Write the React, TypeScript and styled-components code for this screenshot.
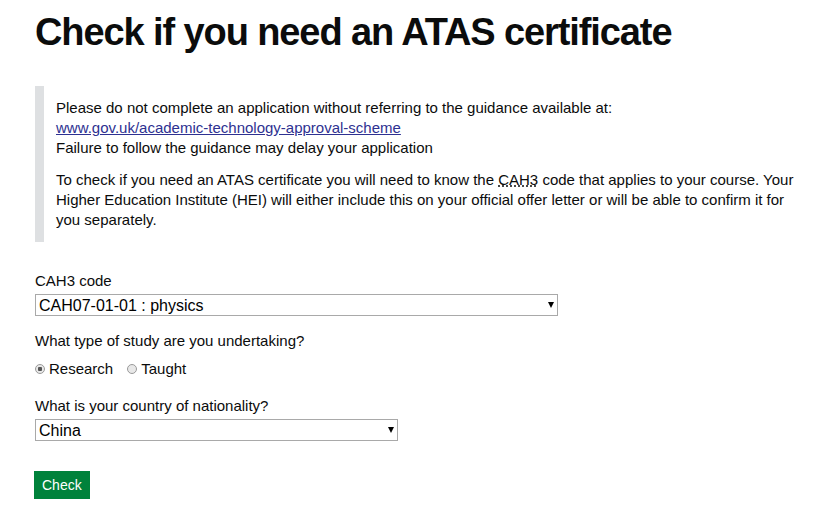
import React from 'react';
import styled, { createGlobalStyle } from 'styled-components';

const GlobalStyle = createGlobalStyle`
  body {
    margin: 0;
    background: #ffffff;
    color: #0b0c0c;
    font-family: "Liberation Sans", Arial, sans-serif;
  }
`;

const Page = styled.main`
  padding: 0 20px 0 35px;
`;

const Title = styled.h1`
  margin: 0;
  padding-top: 10px;
  font-size: 38px;
  line-height: 45px;
  font-weight: 700;
  letter-spacing: -1.1px;
`;

const Inset = styled.div`
  margin-top: 31px;
  border-left: 9px solid #dee0e2;
  padding: 12px 0 12px 12px;
  font-size: 15px;
  line-height: 20px;
`;

const Para = styled.p`
  margin: 0;
  & + & {
    margin-top: 12px;
  }
`;

const Link = styled.a`
  color: #2e3191;
  text-decoration: underline;
`;

const Abbr = styled.abbr`
  text-decoration: underline dotted;
`;

const Form = styled.form`
  margin-top: 29px;
  display: flex;
  flex-direction: column;
  align-items: flex-start;
`;

const Field = styled.div<{ $gap?: number }>`
  margin-bottom: ${(p) => p.$gap ?? 15}px;
  display: flex;
  flex-direction: column;
  align-items: flex-start;
`;

const Label = styled.label`
  font-size: 15px;
  line-height: 20px;
  margin-bottom: 3px;
`;

const SelectWrap = styled.div`
  position: relative;
  display: inline-block;
`;

const Select = styled.select<{ $width: number }>`
  appearance: none;
  display: block;
  width: ${(p) => p.$width}px;
  height: 22px;
  font-family: "Liberation Sans", Arial, sans-serif;
  font-size: 16px;
  border: 1px solid #a9a9a9;
  border-radius: 0;
  background: #fff;
  color: #000;
  padding: 0 0 0 3px;
  margin: 0;
`;

const Arrow = styled.span`
  position: absolute;
  right: 4px;
  top: 50%;
  transform: translateY(-50%);
  width: 0;
  height: 0;
  border-left: 3.5px solid transparent;
  border-right: 3.5px solid transparent;
  border-top: 6px solid #000;
  pointer-events: none;
`;

const Radios = styled.div`
  display: flex;
  gap: 14px;
  margin-top: 5px;
  font-size: 15px;
  line-height: 20px;
`;

const RadioItem = styled.label`
  display: flex;
  align-items: center;
  gap: 4px;

  input {
    appearance: none;
    margin: 0;
    width: 10px;
    height: 10px;
    border-radius: 50%;
    border: 1px solid #9a9a9a;
    background: #e8e8e8;
    box-sizing: border-box;
  }

  input:checked {
    background: radial-gradient(circle, #555 0 2px, #e8e8e8 2.5px);
  }
`;

const Button = styled.button`
  margin-top: 10px;
  margin-left: -1px;
  background: #00823b;
  color: #fff;
  border: 0;
  box-shadow: 0 2px 0 #003618;
  font-family: "Liberation Sans", Arial, sans-serif;
  font-size: 14px;
  height: 28px;
  padding: 0 8px;
`;

export default function App() {
  return (
    <>
      <GlobalStyle />
      <Page>
        <Title>Check if you need an ATAS certificate</Title>
        <Inset>
          <Para>
            Please do not complete an application without referring to the guidance available at:
            <br />
            <Link href="#">www.gov.uk/academic-technology-approval-scheme</Link>
            <br />
            Failure to follow the guidance may delay your application
          </Para>
          <Para>
            To check if you need an ATAS certificate you will need to know the{' '}
            <Abbr title="Common Aggregation Hierarchy">CAH3</Abbr> code that applies to your course. Your
            Higher Education Institute (HEI) will either include this on your official offer letter or will be
            able to confirm it for you separately.
          </Para>
        </Inset>
        <Form onSubmit={(e) => e.preventDefault()}>
          <Field>
            <Label>CAH3 code</Label>
            <SelectWrap>
              <Select $width={523} defaultValue="physics">
                <option value="physics">CAH07-01-01 : physics</option>
              </Select>
              <Arrow />
            </SelectWrap>
          </Field>
          <Field $gap={17}>
            <Label>What type of study are you undertaking?</Label>
            <Radios>
              <RadioItem>
                <input type="radio" name="study" defaultChecked /> Research
              </RadioItem>
              <RadioItem>
                <input type="radio" name="study" /> Taught
              </RadioItem>
            </Radios>
          </Field>
          <Field $gap={20}>
            <Label>What is your country of nationality?</Label>
            <SelectWrap>
              <Select $width={363} defaultValue="china">
                <option value="china">China</option>
              </Select>
              <Arrow />
            </SelectWrap>
          </Field>
          <Button type="submit">Check</Button>
        </Form>
      </Page>
    </>
  );
}
